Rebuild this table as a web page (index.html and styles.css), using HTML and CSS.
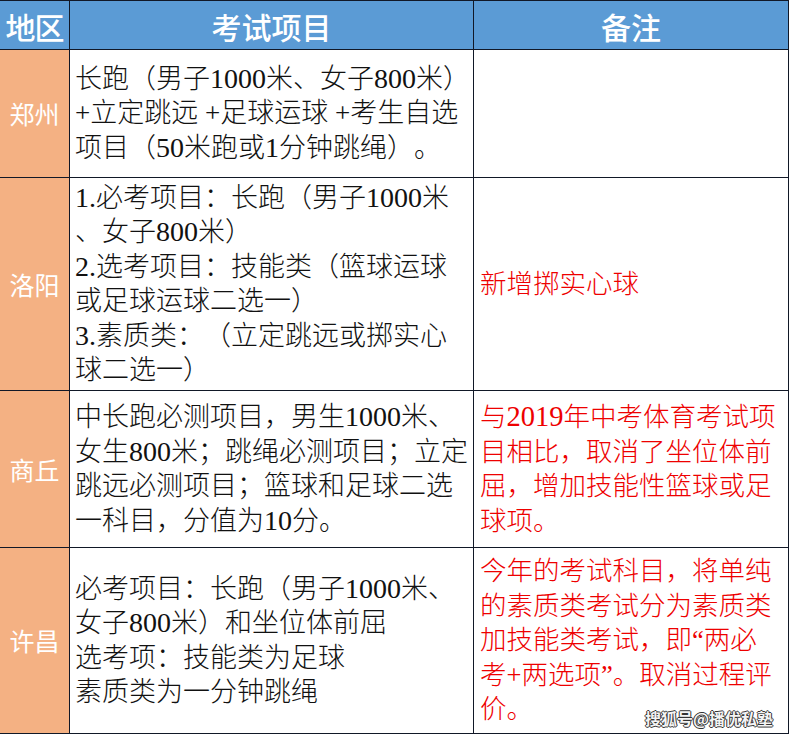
FILE: index.html
```html
<!DOCTYPE html>
<html lang="zh-CN">
<head>
<meta charset="utf-8">
<title>考试项目</title>
<link rel="stylesheet" href="styles.css">
</head>
<body>
<div class="table">
  <div class="cell head region-head">地区</div>
  <div class="cell head">考试项目</div>
  <div class="cell head">备注</div>

  <div class="cell region">郑州</div>
  <div class="cell content"><p class="text">长跑（男子<span class="num">1000</span>米、女子<span class="num">800</span>米）<br>+立定跳远 +足球运球 +考生自选<br>项目（<span class="num">50</span>米跑或<span class="num">1</span>分钟跳绳）。</p></div>
  <div class="cell note"></div>

  <div class="cell region">洛阳</div>
  <div class="cell content"><p class="text"><span class="num">1.</span>必考项目：长跑（男子<span class="num">1000</span>米<br>、女子<span class="num">800</span>米）<br><span class="num">2.</span>选考项目：技能类（篮球运球<br>或足球运球二选一）<br><span class="num">3.</span>素质类：（立定跳远或掷实心<br>球二选一）</p></div>
  <div class="cell note"><p class="text">新增掷实心球</p></div>

  <div class="cell region">商丘</div>
  <div class="cell content"><p class="text">中长跑必测项目，男生<span class="num">1000</span>米、<br>女生<span class="num">800</span>米；跳绳必测项目；立定<br>跳远必测项目；篮球和足球二选<br>一科目，分值为<span class="num">10</span>分。</p></div>
  <div class="cell note"><p class="text">与<span class="num">2019</span>年中考体育考试项<br>目相比，取消了坐位体前<br>屈，增加技能性篮球或足<br>球项。</p></div>

  <div class="cell region">许昌</div>
  <div class="cell content"><p class="text">必考项目：长跑（男子<span class="num">1000</span>米、<br>女子<span class="num">800</span>米）和坐位体前屈<br>选考项：技能类为足球<br>素质类为一分钟跳绳</p></div>
  <div class="cell note"><p class="text">今年的考试科目，将单纯<br>的素质类考试分为素质类<br>加技能类考试，即“两必<br>考+两选项”。取消过程评<br>价。</p></div>

  <div class="watermark">搜狐号@播优私塾</div>
</div>
</body>
</html>
```
FILE: styles.css
```css
html, body {
  margin: 0;
  padding: 0;
  background: #ffffff;
}

.table {
  position: relative;
  display: grid;
  grid-template-columns: 69px 403px 314px;
  grid-template-rows: 48px 127px 212px 156px 185px;
  gap: 1px;
  padding: 1px 1px 1px 0;
  background: #111827;
  width: max-content;
  text-spacing-trim: space-all;
}

.cell {
  display: flex;
  align-items: center;
  background: #ffffff;
  overflow: hidden;
  white-space: nowrap;
}

.text {
  margin: 0;
}

.head {
  background: #5b9bd5;
  color: #ffffff;
  justify-content: center;
  font-family: "Noto Sans CJK SC", sans-serif;
  font-size: 30px;
  font-weight: 500;
  line-height: 1;
  padding-top: 2px;
}

.region-head {
  letter-spacing: -1px;
}

.region {
  background: #f4b183;
  color: #ffffff;
  justify-content: center;
  font-family: "Noto Sans CJK SC", sans-serif;
  font-size: 25px;
  line-height: 1;
}

.content,
.note {
  font-family: "Liberation Serif", "Noto Sans CJK SC", serif;
  line-height: 34.5px;
  font-weight: 300;
  text-spacing-trim: space-all;
}

.content {
  color: #111111;
  font-size: 27px;
  padding-left: 5px;
}

.note {
  color: #ee0000;
  font-size: 26.5px;
  padding-left: 6px;
}

.num {
  font-family: "Liberation Serif", serif;
  font-size: 28px;
  font-weight: 400;
}

.note .num {
  font-size: 28.5px;
}

.watermark {
  position: absolute;
  right: 16px;
  bottom: 8px;
  font-family: "Noto Sans CJK SC", sans-serif;
  font-size: 16px;
  font-weight: 700;
  line-height: 1;
  color: #f4f4f4;
  text-shadow: 1px 0 0 #333, -1px 0 0 #333, 0 1px 0 #333, 0 -1px 0 #333;
}
```
